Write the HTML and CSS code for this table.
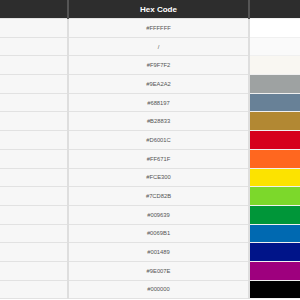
FILE: index.html
```html
<!DOCTYPE html>
<html>
<head>
<meta charset="utf-8">
<link rel="stylesheet" href="styles.css">
</head>
<body>
<table class="colors">
  <thead>
    <tr><th class="name"></th><th class="hex">Hex Code</th><th class="swatch-h"></th></tr>
  </thead>
  <tbody>
    <tr><td class="name"></td><td class="hex">#FFFFFF</td><td class="sw" style="background:#FFFFFF"></td></tr>
    <tr><td class="name"></td><td class="hex">/</td><td class="sw" style="background:#FAFAFA"></td></tr>
    <tr><td class="name"></td><td class="hex">#F9F7F2</td><td class="sw" style="background:#F9F7F2"></td></tr>
    <tr><td class="name"></td><td class="hex">#9EA2A2</td><td class="sw" style="background:#9EA2A2"></td></tr>
    <tr><td class="name"></td><td class="hex">#688197</td><td class="sw" style="background:#688197"></td></tr>
    <tr><td class="name"></td><td class="hex">#B28833</td><td class="sw" style="background:#B28833"></td></tr>
    <tr><td class="name"></td><td class="hex">#D6001C</td><td class="sw" style="background:#D6001C"></td></tr>
    <tr><td class="name"></td><td class="hex">#FF671F</td><td class="sw" style="background:#FF671F"></td></tr>
    <tr><td class="name"></td><td class="hex">#FCE300</td><td class="sw" style="background:#FCE300"></td></tr>
    <tr><td class="name"></td><td class="hex">#7CD82B</td><td class="sw" style="background:#7CD82B"></td></tr>
    <tr><td class="name"></td><td class="hex">#009639</td><td class="sw" style="background:#009639"></td></tr>
    <tr><td class="name"></td><td class="hex">#0069B1</td><td class="sw" style="background:#0069B1"></td></tr>
    <tr><td class="name"></td><td class="hex">#001489</td><td class="sw" style="background:#001489"></td></tr>
    <tr><td class="name"></td><td class="hex">#9E007E</td><td class="sw" style="background:#9E007E"></td></tr>
    <tr><td class="name"></td><td class="hex">#000000</td><td class="sw" style="background:#000000"></td></tr>
  </tbody>
</table>
</body>
</html>
```
FILE: styles.css
```css
html, body {
  margin: 0;
  padding: 0;
  background: #ffffff;
  overflow: hidden;
}
.colors {
  border-collapse: collapse;
  table-layout: fixed;
  width: 490px;
  margin-left: -123px;
  font-family: "Liberation Sans", Arial, sans-serif;
}
.colors th {
  background: #2d2d2d;
  color: #ffffff;
  font-weight: bold;
  font-size: 8px;
  height: 18px;
  padding: 0;
  border-left: 2px solid #555555;
  border-right: 2px solid #555555;
  text-align: center;
}
.colors th.name { width: 188px; }
.colors th.hex { width: 179px; }
.colors td {
  height: 17.7px;
  padding: 0;
  border-top: 1px solid #e2e2e2;
  border-bottom: 1px solid #e2e2e2;
  border-left: 2px solid #dedede;
  border-right: 2px solid #dedede;
  background: #f7f7f7;
  color: #555555;
  font-size: 5.8px;
  text-align: center;
}
.colors td.sw {
  border-top: 1px solid #f0f0f0;
  border-bottom: 1px solid #f0f0f0;
}
```
